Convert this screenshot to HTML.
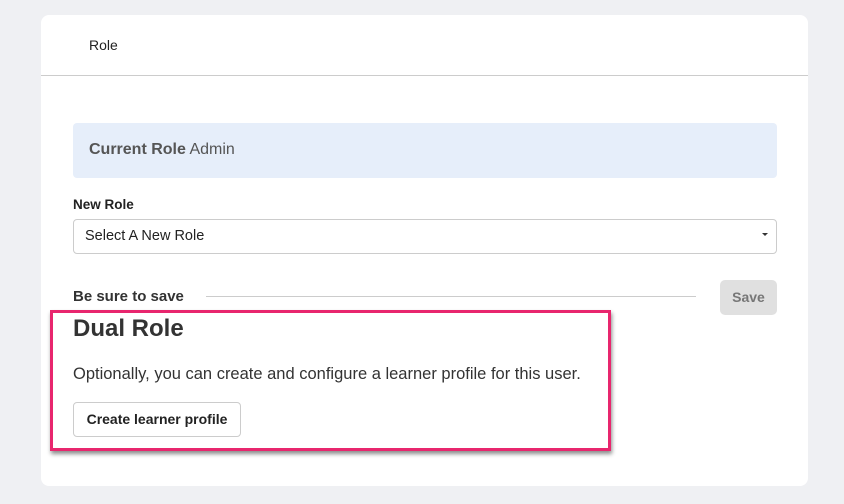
<!DOCTYPE html>
<html><head><style>
body{margin:0;width:844px;height:504px;background:#eff0f3;font-family:"Liberation Sans",sans-serif;position:relative;overflow:hidden;color:#222}
.card{position:absolute;left:41px;top:15px;width:767px;height:471px;background:#fff;border-radius:8px}
.a{position:absolute}
</style></head><body>
<div class="card"></div>
<div class="a" style="left:89px;top:37px;font-size:14px;color:#222">Role</div>
<div class="a" style="left:41px;top:75px;width:767px;height:1px;background:#ccc"></div>
<div class="a" style="left:73px;top:123px;width:704px;height:55px;background:#e6eefa;border-radius:4px"></div>
<div class="a" style="left:89px;top:141px;font-size:16px;color:#555"><b>Current Role</b> Admin</div>
<div class="a" style="left:73px;top:197px;font-size:13.5px;font-weight:bold;color:#222">New Role</div>
<div class="a" style="left:73px;top:219px;width:702px;height:33px;border:1px solid #ccc;border-radius:4px"></div>
<div class="a" style="left:85px;top:228px;font-size:14.5px;color:#222">Select A New Role</div>
<div class="a" style="left:762px;top:233px;width:0;height:0;border-left:3px solid transparent;border-right:3px solid transparent;border-top:3px solid #333"></div>
<div class="a" style="left:73px;top:288px;font-size:15px;font-weight:bold;color:#333">Be sure to save</div>
<div class="a" style="left:206px;top:296px;width:490px;height:1px;background:#ccc"></div>
<div class="a" style="left:720px;top:280px;width:57px;height:35px;background:#e0e0e0;border-radius:5px;font-size:14px;font-weight:bold;color:#777;text-align:center;line-height:35px">Save</div>
<div class="a" style="left:50px;top:310px;width:555px;height:135px;border:3px solid #e8266e;box-shadow:1px 3px 4px rgba(0,0,0,.45)"></div>
<div class="a" style="left:73px;top:315px;font-size:24px;font-weight:bold;color:#333">Dual Role</div>
<div class="a" style="left:73px;top:365px;font-size:16.5px;color:#333">Optionally, you can create and configure a learner profile for this user.</div>
<div class="a" style="left:73px;top:402px;width:166px;height:33px;border:1px solid #ccc;border-radius:4px;font-size:14px;font-weight:bold;text-align:center;line-height:33px;color:#222">Create learner profile</div>
</body></html>
